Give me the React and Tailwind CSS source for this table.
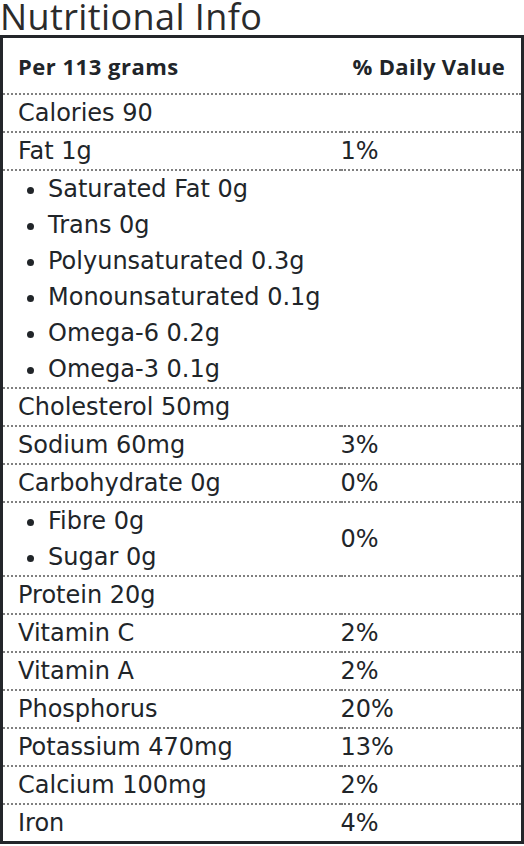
import React from "react";

const rows = [
  { label: "Calories 90", dv: "" },
  { label: "Fat 1g", dv: "1%" },
  {
    list: [
      "Saturated Fat 0g",
      "Trans 0g",
      "Polyunsaturated 0.3g",
      "Monounsaturated 0.1g",
      "Omega-6 0.2g",
      "Omega-3 0.1g",
    ],
    dv: "",
  },
  { label: "Cholesterol 50mg", dv: "" },
  { label: "Sodium 60mg", dv: "3%" },
  { label: "Carbohydrate 0g", dv: "0%" },
  { list: ["Fibre 0g", "Sugar 0g"], dv: "0%" },
  { label: "Protein 20g", dv: "" },
  { label: "Vitamin C", dv: "2%" },
  { label: "Vitamin A", dv: "2%" },
  { label: "Phosphorus", dv: "20%" },
  { label: "Potassium 470mg", dv: "13%" },
  { label: "Calcium 100mg", dv: "2%" },
  { label: "Iron", dv: "4%" },
];

export default function App() {
  return (
    <div className="w-[524px] h-[846px] overflow-hidden bg-white text-[#212529] font-['Open_Sans',sans-serif]">
      <h2 className="h-[35px] text-[36px] leading-[33px] text-[#2b2b2b] tracking-[0.4px] whitespace-nowrap">
        Nutritional Info
      </h2>
      <table className="w-full border-collapse border-[3px] border-[#23262a] table-fixed">
        <colgroup>
          <col className="w-[339px]" />
          <col />
        </colgroup>
        <thead>
          <tr className="h-[57px] border-b-2 border-dotted border-[#808080]">
            <th className="text-left pl-[15px] text-[22px] font-bold tracking-[0.5px] pt-[3px]">
              Per 113 grams
            </th>
            <th className="text-right pr-[16px] text-[22px] font-bold tracking-[0.3px] pt-[3px]">
              % Daily Value
            </th>
          </tr>
        </thead>
        <tbody className="text-[24px] leading-[36px] font-['DejaVu_Sans',sans-serif]">
          {rows.map((r, i) => (
            <tr
              key={i}
              className={
                i < rows.length - 1
                  ? "border-b-2 border-dotted border-[#808080]"
                  : ""
              }
            >
              <td className="pl-[15px] p-0 align-middle">
                {r.list ? (
                  <ul className="list-disc pl-[30px]">
                    {r.list.map((item) => (
                      <li key={item} className="h-[36px] whitespace-nowrap">
                        {item}
                      </li>
                    ))}
                  </ul>
                ) : (
                  <div className="h-[36px] whitespace-nowrap">{r.label}</div>
                )}
              </td>
              <td className="p-0 align-middle">{r.dv}</td>
            </tr>
          ))}
        </tbody>
      </table>
    </div>
  );
}
